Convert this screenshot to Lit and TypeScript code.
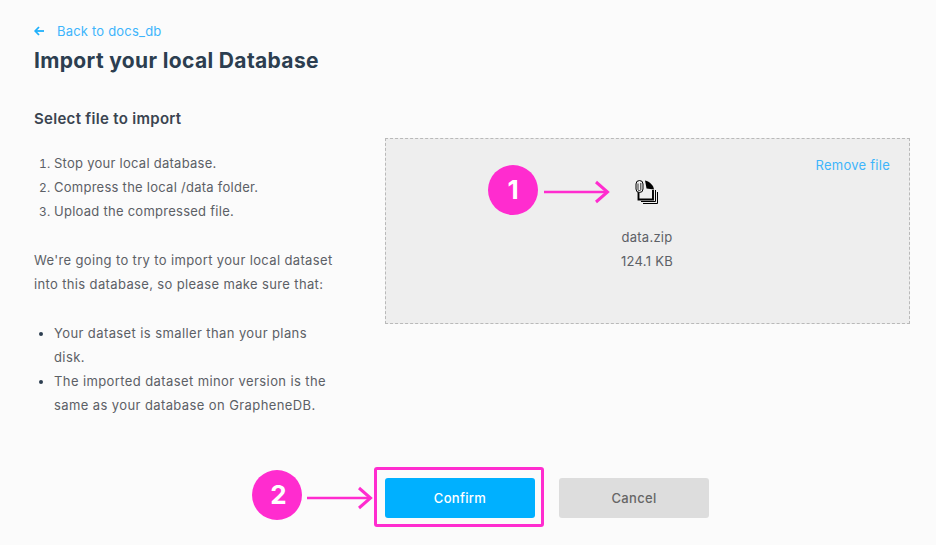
import { LitElement, html, css } from 'lit';
import { customElement } from 'lit/decorators.js';

const arrow = html`<svg class="arrow" width="66" height="24" viewBox="0 0 66 24" fill="none" stroke="#ff2ccf">
  <path d="M0 12H63" stroke-width="2.6"></path><path d="M52 2L63.5 12L52 22" stroke-width="3"></path>
</svg>`;

@customElement('app-root')
export class AppRoot extends LitElement {
  static styles = css`
    :host {
      display: block;
      width: 936px;
      height: 545px;
      overflow: hidden;
      background: #fbfbfb;
      color: #5c6066;
      font-family: Inter, "Open Sans", sans-serif;
      font-size: 13px;
      line-height: 24px;
      letter-spacing: 0.26px;
    }
    .page {
      padding: 19px 26px 0 34px;
    }
    .back {
      display: flex;
      align-items: center;
      gap: 13px;
      color: #3eb5fb;
      height: 24px;
      letter-spacing: 0.2px;
    }
    h1 {
      margin: 4px 0 0;
      font-size: 21px;
      line-height: 28px;
      font-weight: 700;
      color: #2c3e50;
      letter-spacing: 0.35px;
    }
    .columns {
      display: grid;
      grid-template-columns: 351px 525px;
      margin-top: 32px;
    }
    h2 {
      margin: 0;
      font-size: 15px;
      line-height: 24px;
      font-weight: 600;
      color: #3a4450;
      letter-spacing: 0.3px;
    }
    .steps, .notes {
      margin: 0;
      padding: 0 0 0 20px;
      width: 275px;
    }
    .steps {
      margin-top: 20px;
    }
    .steps li::marker {
      font-size: 12px;
    }
    .intro {
      margin: 25px 0 0;
      letter-spacing: 0.36px;
    }
    .notes {
      margin-top: 25px;
      letter-spacing: 0.4px;
    }
    .notes li::marker {
      color: #2c3e50;
    }
    .drop {
      position: relative;
      box-sizing: border-box;
      height: 186px;
      margin-top: 31px;
      background: #eeeeee;
      border: 1px dashed #b9b9b9;
      display: flex;
      flex-direction: column;
      align-items: center;
      padding-top: 41px;
      padding-right: 1px;
    }
    .remove {
      position: absolute;
      top: 14px;
      right: 19px;
      color: #3eb5fb;
    }
    .clip {
      display: block;
      margin-bottom: 19px;
    }
    .actions {
      grid-column: 2;
      display: flex;
      gap: 24px;
      margin-top: 61px;
    }
    .btn {
      width: 150px;
      height: 40px;
      border: 0;
      border-radius: 3px;
      font: inherit;
      font-weight: 500;
      letter-spacing: 0.3px;
      padding: 0;
    }
    .confirm {
      position: relative;
      background: #00b0ff;
      color: #fff;
    }
    .cancel {
      background: #dddddd;
      color: #666;
    }
    .ring {
      position: absolute;
      inset: -11px -9px -9px -11px;
      border: 3px solid #ff2ccf;
      border-radius: 3px;
    }
    .callout {
      position: absolute;
      display: flex;
      align-items: center;
    }
    .badge {
      width: 50px;
      height: 50px;
      border-radius: 50%;
      background: #ff2ccf;
      color: #fff;
      font-size: 26px;
      font-weight: 700;
      line-height: 50px;
      text-align: center;
      letter-spacing: 0;
    }
    .one { left: 488px; top: 165px; gap: 6px; }
    .one .arrow { margin-top: 3px; }
    .two { left: 252px; top: 470px; gap: 5px; }
    .two .arrow { margin-top: 5px; }
    .two .badge { text-indent: 3px; }
  `;

  render() {
    return html`<div class="page">
        <div class="back">
          <svg width="10" height="10" viewBox="0 0 10 10" fill="none" stroke="#1fb0fb" stroke-width="1.8">
            <path d="M10 5H1.5"></path><path d="M5 1L1.2 5L5 9"></path>
          </svg>
          <span>Back to docs_db</span>
        </div>
        <h1>Import your local Database</h1>
        <div class="columns">
          <div>
            <h2>Select file to import</h2>
            <ol class="steps">
              <li>Stop your local database.</li>
              <li>Compress the local /data folder.</li>
              <li>Upload the compressed file.</li>
            </ol>
            <p class="intro">We're going to try to import your local dataset<br />into this database, so please make sure that:</p>
            <ul class="notes">
              <li>Your dataset is smaller than your plans disk.</li>
              <li>The imported dataset minor version is the same as your database on GrapheneDB.</li>
            </ul>
          </div>
          <div class="drop">
            <span class="remove">Remove file</span>
            <svg class="clip" width="24" height="26" viewBox="0 0 24 26" fill="none" stroke="#000">
              <path d="M3.5 12V19.5H18V10" stroke-width="1.9"></path>
              <path d="M10 0.5C15 1.5 18.5 5.5 19 9.5L11.5 8.5Z" fill="#000" stroke="none"></path>
              <path d="M20.5 10V21.5H6" stroke-width="1"></path>
              <path d="M22.5 12V23.5H8" stroke-width="1"></path>
              <rect x="1" y="0.5" width="7" height="12" rx="3.5" fill="#eee" stroke-width="1"></rect>
              <path d="M3 3.5V9.5C3 11 5.8 11 5.8 9.5V3" stroke-width="0.8"></path>
            </svg>
            <span>data.zip</span>
            <span>124.1 KB</span>
          </div>
          <div class="actions">
            <button class="btn confirm">Confirm<span class="ring"></span></button>
            <button class="btn cancel">Cancel</button>
          </div>
        </div>
      </div>
      <div class="callout one"><div class="badge">1</div>${arrow}</div>
      <div class="callout two"><div class="badge">2</div>${arrow}</div>`;
  }
}
